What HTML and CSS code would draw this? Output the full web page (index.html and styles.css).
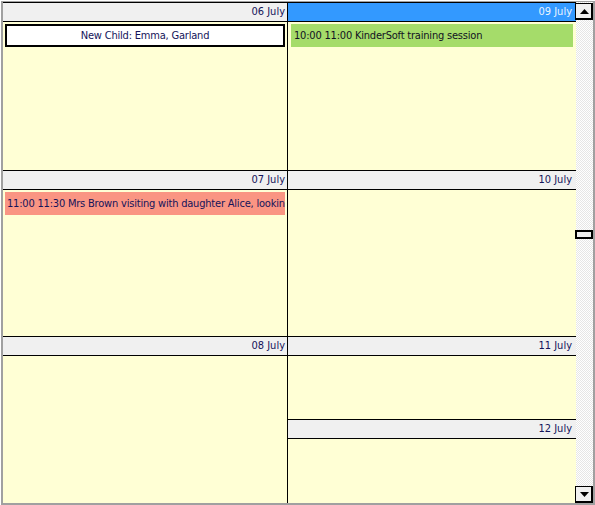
FILE: index.html
```html
<!DOCTYPE html>
<html>
<head>
<meta charset="utf-8">
<link rel="stylesheet" href="styles.css">
</head>
<body>
<div class="frame">
  <div class="grid">
    <div class="cell left">
      <div class="head">06 July</div>
      <div class="body">
        <div class="event child">New Child: Emma, Garland</div>
      </div>
    </div>
    <div class="cell right">
      <div class="head sel">09 July</div>
      <div class="body">
        <div class="event green">10:00 11:00 KinderSoft training session</div>
      </div>
    </div>
    <div class="cell left">
      <div class="head">07 July</div>
      <div class="body">
        <div class="event pink">11:00 11:30 Mrs Brown visiting with daughter Alice, looking around the nursery</div>
      </div>
    </div>
    <div class="cell right">
      <div class="head">10 July</div>
      <div class="body"></div>
    </div>
    <div class="cell left">
      <div class="head">08 July</div>
      <div class="body"></div>
    </div>
    <div class="cell right split">
      <div class="half first">
        <div class="head">11 July</div>
        <div class="body"></div>
      </div>
      <div class="half">
        <div class="head">12 July</div>
        <div class="body"></div>
      </div>
    </div>
  </div>
  <div class="scroll">
    <div class="btn">
      <svg width="9" height="5" viewBox="0 0 9 5"><polygon points="0,5 9,5 4.5,0" fill="#000"/></svg>
    </div>
    <div class="track"><div class="thumb"></div></div>
    <div class="btn">
      <svg width="9" height="5" viewBox="0 0 9 5"><polygon points="0,0 9,0 4.5,5" fill="#000"/></svg>
    </div>
  </div>
</div>
</body>
</html>
```
FILE: styles.css
```css
html, body {
  margin: 0;
  padding: 0;
  background: #ffffff;
}
body {
  font-family: "DejaVu Sans Condensed", "DejaVu Sans", sans-serif;
  font-size: 11px;
}
.frame {
  margin: 1px 0 0 1px;
  width: 590px;
  height: 501px;
  border: 2px solid #a0a0a0;
  border-top: 1px solid #a0a0a0;
  display: flex;
}
.grid {
  flex: 1;
  display: grid;
  grid-template-columns: 285px 288px;
  grid-template-rows: 168px 166px 167px;
}
.cell {
  display: flex;
  flex-direction: column;
  background: #ffffd5;
  min-height: 0;
  overflow: hidden;
}
.cell.left {
  border-right: 1px solid #000;
}
.half {
  flex: 1;
  display: flex;
  flex-direction: column;
}
.half.first {
  flex: 0 0 83px;
}
.head {
  height: 18px;
  line-height: 18px;
  border-top: 1px solid #000;
  border-bottom: 1px solid #000;
  background: #f0f0f0;
  color: #14145a;
  text-align: right;
  padding-right: 2px;
  flex: none;
}
.right .head {
  padding-right: 4px;
}
.head.sel {
  background: #3399ff;
  color: #eaf4ff;
}
.body {
  flex: 1;
  padding: 2px 2px 0 2px;
}
.right .body {
  padding: 2px 3px 0 3px;
}
.event {
  height: 23px;
  line-height: 23px;
  white-space: nowrap;
  overflow: hidden;
  box-sizing: border-box;
  color: #14145a;
  letter-spacing: -0.2px;
}
.event.child {
  background: #ffffff;
  border: 2px solid #000;
  line-height: 19px;
  text-align: center;
}
.event.green {
  background: #a5dc6a;
  color: #111122;
  padding-left: 3px;
}
.event.pink {
  background: #fa9583;
  padding-left: 2px;
}
.scroll {
  width: 17px;
  display: flex;
  flex-direction: column;
  background: repeating-conic-gradient(#ffffff 0 25%, #e6e6e6 0 50%) 0 0 / 2px 2px;
}
.btn {
  height: 17px;
  box-sizing: border-box;
  border: 1px solid #000;
  box-shadow: inset -1px -1px 0 #000;
  background: #f0f0f0;
  display: flex;
  align-items: center;
  justify-content: center;
  flex: none;
  margin-left: -1px;
  margin-top: 1px;
}
.btn:last-child {
  margin-top: 0;
}
.track {
  flex: 1;
  position: relative;
}
.thumb {
  position: absolute;
  left: -1px;
  right: 0;
  top: 210px;
  height: 9px;
  box-sizing: border-box;
  border: 2px solid #000;
  background: #eeeeee;
}
```
